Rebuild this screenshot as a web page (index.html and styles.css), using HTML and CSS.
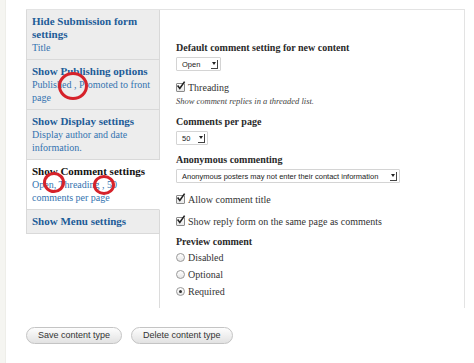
FILE: index.html
```
<!DOCTYPE html>
<html>
<head>
<meta charset="utf-8">
<link rel="stylesheet" href="styles.css">
</head>
<body>
<div class="page">
  <div class="gutter"></div>
  <div class="main">
    <div class="vtabs">
      <ul class="tablist">
        <li class="tab"><a class="tab-title">Hide Submission form settings</a><span class="tab-summary">Title</span></li>
        <li class="tab"><a class="tab-title">Show Publishing options</a><span class="tab-summary">Published , Promoted to front page</span></li>
        <li class="tab"><a class="tab-title">Show Display settings</a><span class="tab-summary">Display author and date information.</span></li>
        <li class="tab is-selected"><a class="tab-title">Show Comment settings</a><span class="tab-summary">Open, Threading , 50 comments per page</span></li>
        <li class="tab"><a class="tab-title">Show Menu settings</a></li>
      </ul>
      <div class="panel">
        <div class="label">Default comment setting for new content</div>
        <div class="select select-sm"><span class="select-text">Open</span><span class="arrow"><i></i></span></div>

        <div class="check check-first"><span class="box"><svg viewBox="0 0 10 10" width="10" height="10"><path d="M1.6 4.6 L3.8 7.4 L8.6 0.6" fill="none" stroke="#222" stroke-width="1.6"/></svg></span><span>Threading</span></div>
        <div class="desc">Show comment replies in a threaded list.</div>

        <div class="label label-gap">Comments per page</div>
        <div class="select select-xs"><span class="select-text">50</span><span class="arrow"><i></i></span></div>

        <div class="label label-gap">Anonymous commenting</div>
        <div class="select select-lg"><span class="select-text">Anonymous posters may not enter their contact information</span><span class="arrow"><i></i></span></div>

        <div class="check check-first"><span class="box"><svg viewBox="0 0 10 10" width="10" height="10"><path d="M1.6 4.6 L3.8 7.4 L8.6 0.6" fill="none" stroke="#222" stroke-width="1.6"/></svg></span><span>Allow comment title</span></div>
        <div class="check check-gap"><span class="box"><svg viewBox="0 0 10 10" width="10" height="10"><path d="M1.6 4.6 L3.8 7.4 L8.6 0.6" fill="none" stroke="#222" stroke-width="1.6"/></svg></span><span>Show reply form on the same page as comments</span></div>

        <div class="label label-gap2">Preview comment</div>
        <div class="radios">
          <div class="radio"><span class="dot"></span><span>Disabled</span></div>
          <div class="radio"><span class="dot"></span><span>Optional</span></div>
          <div class="radio"><span class="dot is-on"></span><span>Required</span></div>
        </div>
      </div>
    </div>
    <div class="actions">
      <button class="btn">Save content type</button>
      <button class="btn">Delete content type</button>
    </div>
  </div>
  <span class="mark mark-1"></span>
  <span class="mark mark-2"></span>
  <span class="mark mark-3"></span>
</div>
</body>
</html>
```
FILE: styles.css
```
html, body {
  margin: 0;
  padding: 0;
  background: #fff;
}
body {
  font-family: "Liberation Serif", "Times New Roman", serif;
  color: #333;
}
.page {
  position: relative;
  display: flex;
  width: 474px;
  height: 363px;
  overflow: hidden;
}
.gutter {
  flex: none;
  width: 5px;
  background: #f5f5f1;
  border-right: 1px solid #eeeee9;
}
.main {
  flex: none;
  padding: 9px 0 0 20px;
}
.vtabs {
  display: flex;
  width: 439px;
  height: 299px;
  box-sizing: border-box;
  border-top: 1px solid #e3e3e3;
  border-right: 1px solid #e3e3e3;
}
.tablist {
  flex: none;
  width: 134px;
  box-sizing: border-box;
  margin: 0;
  padding: 0;
  list-style: none;
  border-right: 1px solid #dcdcdc;
}
.tab {
  margin-right: -1px;
  padding: 5px 6px 5px 5px;
  background: #ededed;
  border-left: 1px solid #d9d9d9;
  border-right: 1px solid #d9d9d9;
  border-bottom: 1px solid #d9d9d9;
  line-height: 13px;
}
.tab.is-selected {
  background: #fff;
  border-right-color: #fff;
}
.tab-title {
  display: block;
  font-weight: bold;
  font-size: 11px;
  color: #1d5c98;
}
.is-selected .tab-title {
  color: #111;
}
.tab-summary {
  display: block;
  font-size: 10px;
  color: #3473b0;
}
.panel {
  flex: 1;
  padding: 32px 0 0 16px;
}
.label {
  font-weight: bold;
  font-size: 10px;
  line-height: 12px;
  color: #2a2a2a;
}
.label-gap {
  margin-top: 9px;
}
.label-gap2 {
  margin-top: 8px;
}
.select {
  display: flex;
  align-items: center;
  justify-content: space-between;
  box-sizing: border-box;
  height: 14px;
  margin-top: 3px;
  padding: 0 2px 0 5px;
  border: 1px solid #d4d4d4;
  border-radius: 1px;
  background: #fff;
  font-family: "Liberation Sans", Arial, sans-serif;
  font-size: 7.5px;
  color: #222;
}
.select-sm { width: 45px; }
.select-xs { width: 32px; }
.select-lg { width: 224px; }
.arrow {
  display: flex;
  align-items: center;
  justify-content: center;
  width: 6px;
  height: 8px;
  border-right: 1px solid #444;
  border-bottom: 1px solid #444;
}
.arrow i {
  width: 0;
  height: 0;
  border-left: 2px solid transparent;
  border-right: 2px solid transparent;
  border-top: 3px solid #222;
}
.check, .radio {
  display: flex;
  align-items: center;
  gap: 3px;
  height: 13px;
  font-size: 10px;
  color: #333;
}
.check-first {
  margin-top: 10px;
}
.check-gap {
  margin-top: 9px;
}
.box {
  position: relative;
  flex: none;
  width: 7px;
  height: 7px;
  border: 1px solid #8a8a8a;
  border-radius: 1px;
  background: linear-gradient(#fff, #e9e9e9);
}
.box svg {
  position: absolute;
  left: -1px;
  top: -3px;
}
.desc {
  margin-top: 2px;
  font-style: italic;
  font-size: 8.5px;
  line-height: 11px;
  color: #444;
}
.radios {
  margin-top: 1px;
}
.radio {
  height: 17px;
}
.dot {
  display: flex;
  align-items: center;
  justify-content: center;
  flex: none;
  width: 7px;
  height: 7px;
  border: 1px solid #999;
  border-radius: 50%;
  background: linear-gradient(#fff, #e6e6e6);
}
.dot.is-on::after {
  content: "";
  width: 3px;
  height: 3px;
  border-radius: 50%;
  background: #333;
}
.actions {
  display: flex;
  gap: 9px;
  margin-top: 19px;
}
.btn {
  height: 17px;
  padding: 0 11px;
  border: 1px solid #c4c4c4;
  border-radius: 9px;
  background: linear-gradient(#fdfdfd, #e2e2e2);
  font-family: "Liberation Sans", Arial, sans-serif;
  font-size: 9px;
  color: #333;
  line-height: 15px;
}
.mark {
  position: absolute;
  box-sizing: border-box;
  border: 3px solid #d6222a;
  border-radius: 50%;
}
.mark-1 { left: 58px; top: 72px; width: 30px; height: 28px; }
.mark-2 { left: 43px; top: 172px; width: 22px; height: 21px; }
.mark-3 { left: 93px; top: 175px; width: 22px; height: 20px; }
```
